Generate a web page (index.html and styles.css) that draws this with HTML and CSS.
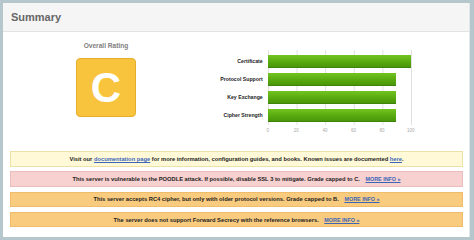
FILE: index.html
```html
<!DOCTYPE html>
<html lang="en">
<head>
    <meta charset="utf-8" />
    <title>SSL Report: Summary</title>
    <meta name="viewport" content="width=device-width, initial-scale=1" />
<link rel="stylesheet" href="styles.css">
</head>
<body>
<div class="panel">
  <div class="panel-head">Summary</div>

  <div class="summary">
    <div class="rating">
      <div class="rating-title">Overall Rating</div>
      <div class="grade">C</div>
    </div>

    <div class="chart">
      <div class="chart-labels">
        <div>Certificate</div>
        <div>Protocol Support</div>
        <div>Key Exchange</div>
        <div>Cipher Strength</div>
      </div>
      <div class="chart-plot">
        <div class="plot-area">
          <div class="bar" style="width: 100%"></div>
          <div class="bar" style="width: 90%"></div>
          <div class="bar" style="width: 90%"></div>
          <div class="bar" style="width: 90%"></div>
        </div>
        <div class="axis">
          <span>0</span><span>20</span><span>40</span><span>60</span><span>80</span><span>100</span>
        </div>
      </div>
    </div>
  </div>

  <div class="notices">
    <div class="notice info">Visit our <a href="#">documentation page</a>&nbsp;for more information, configuration guides, and books. Known issues are documented <a href="#">here</a>.</div>
    <div class="notice error">This server is vulnerable to the POODLE attack. If possible, disable SSL 3 to mitigate. Grade capped to C. <a class="more" href="#">MORE INFO &raquo;</a></div>
    <div class="notice warning">This server accepts RC4 cipher, but only with older protocol versions. Grade capped to B. <a class="more" href="#">MORE INFO &raquo;</a></div>
    <div class="notice warning">The server does not support Forward Secrecy with the reference browsers. <a class="more" href="#">MORE INFO &raquo;</a></div>
  </div>
</div>
</body>
</html>
```

FILE: styles.css
```css
html, body {
    margin: 0;
    background-color: #b5c7cd;
}

body {
    width: 474px;
    height: 240px;
    box-sizing: border-box;
    padding: 3px 4px 3px 3px;
    font-family: "Liberation Sans", Arial, sans-serif;
    color: #333;
}

.panel {
    height: 234px;
    background-color: #fff;
    border-right: 1px solid #e2e8ea;
}

.panel-head {
    height: 28px;
    line-height: 28px;
    padding-left: 8px;
    background-color: #f5f5f5;
    border-bottom: 1px solid #e3e3e3;
    font-size: 11px;
    font-weight: 700;
    color: #666;
}

.summary {
    display: flex;
    height: 119px;
}

.rating {
    width: 192px;
    margin-left: 7px;
    text-align: center;
}

.rating-title {
    margin-top: 9.6px;
    line-height: 8px;
    font-size: 6.6px;
    font-weight: 700;
    color: #808080;
}

.grade {
    width: 60px;
    height: 59px;
    box-sizing: border-box;
    margin: 8.4px auto 0;
    background-color: #f8c43e;
    border: 1px solid #e6ae2e;
    border-radius: 4px;
    color: #fff;
    font-size: 42px;
    font-weight: 700;
    line-height: 57px;
}

.chart {
    display: flex;
    gap: 5px;
    margin-top: 18px;
}

.chart-labels {
    width: 60.7px;
    padding-top: 5px;
    display: flex;
    flex-direction: column;
    gap: 5px;
}

.chart-labels div {
    height: 13px;
    line-height: 13px;
    text-align: right;
    font-size: 5.2px;
    font-weight: 700;
    color: #222;
}

.plot-area {
    width: 143px;
    padding: 5px 0 2.5px;
    display: flex;
    flex-direction: column;
    gap: 5px;
    border-right: 1px solid #e0e0e0;
    background: linear-gradient(to right, #e0e0e0 1px, transparent 1px) 0 0 / 28.6px 100% repeat-x;
}

.bar {
    height: 13px;
    box-sizing: border-box;
    background: linear-gradient(to bottom, #72c420, #57a80e 60%, #4a960a);
    border-bottom: 1px solid #3f840a;
}

.axis {
    width: 143px;
    margin-top: 3.2px;
    display: flex;
    justify-content: space-between;
    line-height: 6px;
    font-size: 4.5px;
    color: #a8a8a8;
}

.axis span {
    width: 0;
    display: flex;
    justify-content: center;
    white-space: nowrap;
}

.notices {
    padding: 0 6px 0 7px;
    display: flex;
    flex-direction: column;
    gap: 4.8px;
}

.notice {
    height: 15.5px;
    box-sizing: border-box;
    display: flex;
    align-items: center;
    justify-content: center;
    white-space: pre;
    font-size: 5.75px;
    font-weight: 700;
    color: #222;
    border: 1px solid;
}

.notice a {
    color: #3b66b8;
}

.notice .more {
    margin-left: 4px;
    font-size: 5.4px;
}

.info {
    background-color: #fff9d8;
    border-color: #ece2a8;
}

.error {
    background-color: #f7d0d0;
    border-color: #ebbdbd;
}

.warning {
    background-color: #f9cb7f;
    border-color: #efbc6c;
}
```
